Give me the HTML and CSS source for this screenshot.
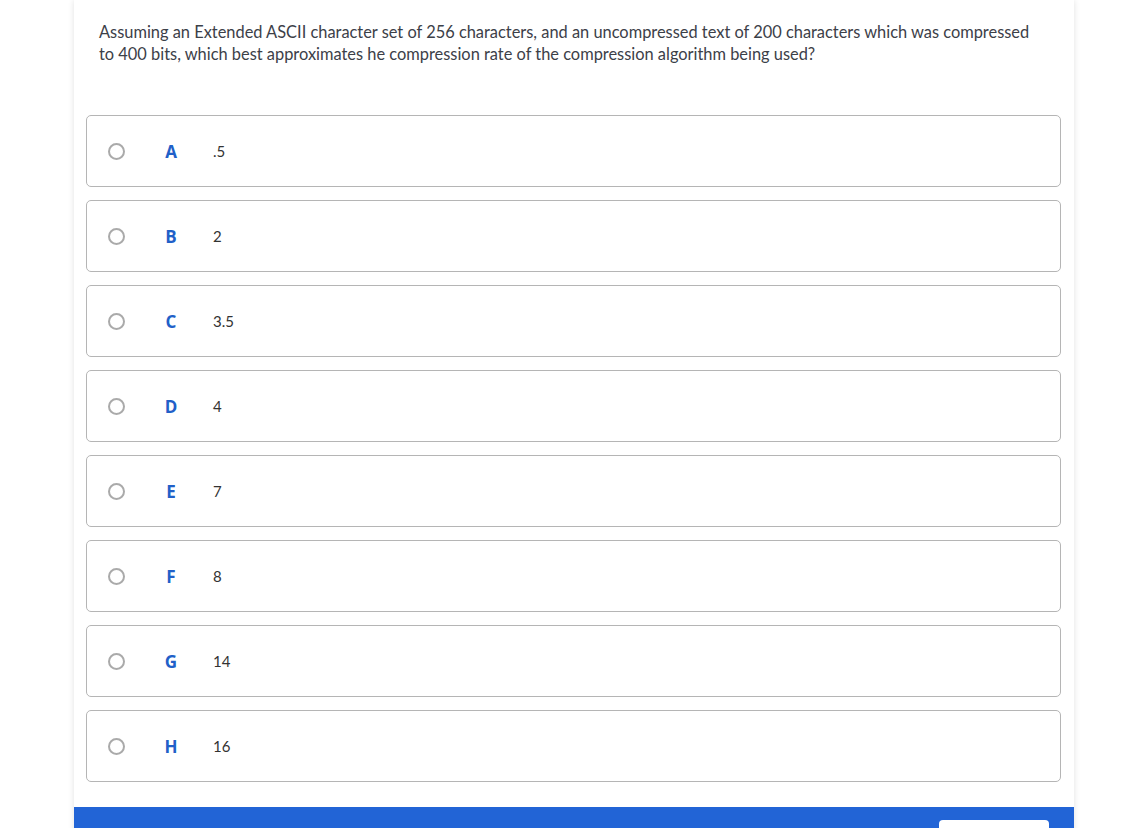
FILE: index.html
```html
<!DOCTYPE html>
<html lang="en">
<head>
    <meta charset="UTF-8">
    <meta name="viewport" content="width=device-width, initial-scale=1.0">
    <title>Question</title>
    <link rel="stylesheet" href="styles.css">
</head>
<body>
    <div class="card">
        <p class="question">Assuming an Extended ASCII character set of 256 characters, and an uncompressed text of 200 characters which was compressed to 400 bits, which best approximates he compression rate of the compression algorithm being used?</p>
        <div class="options">
            <label class="option"><span class="radio"></span><span class="letter">A</span><span class="value">.5</span></label>
            <label class="option"><span class="radio"></span><span class="letter">B</span><span class="value">2</span></label>
            <label class="option"><span class="radio"></span><span class="letter">C</span><span class="value">3.5</span></label>
            <label class="option"><span class="radio"></span><span class="letter">D</span><span class="value">4</span></label>
            <label class="option"><span class="radio"></span><span class="letter">E</span><span class="value">7</span></label>
            <label class="option"><span class="radio"></span><span class="letter">F</span><span class="value">8</span></label>
            <label class="option"><span class="radio"></span><span class="letter">G</span><span class="value">14</span></label>
            <label class="option"><span class="radio"></span><span class="letter">H</span><span class="value">16</span></label>
        </div>
        <div class="footer">
            <button class="next"></button>
        </div>
    </div>
</body>
</html>
```
FILE: styles.css
```css
body {
    margin: 0;
    background-color: #fff;
    font-family: 'Lato', sans-serif;
    color: #3c4048;
}
.card {
    width: 1000px;
    margin-left: 74px;
    background-color: #fff;
    box-shadow: 0 0 6px rgba(0, 0, 0, 0.12);
    min-height: 828px;
    display: flex;
    flex-direction: column;
}
.question {
    margin: 0;
    padding: 21px 34px 0 25px;
    font-size: 16.4px;
    line-height: 22px;
    height: 94px;
}
.options {
    display: flex;
    flex-direction: column;
    gap: 13px;
    padding: 0 13px 0 12px;
}
.option {
    display: flex;
    align-items: center;
    height: 70px;
    border: 1px solid #b5b5b5;
    border-radius: 5px;
    padding-left: 21px;
    font-size: 15px;
}
.radio {
    width: 13px;
    height: 13px;
    border: 2px solid #aaa;
    border-radius: 50%;
    flex-shrink: 0;
}
.letter {
    width: 20px;
    margin-left: 36px;
    font-family: 'Open Sans', sans-serif;
    font-weight: 700;
    font-size: 17px;
    color: #2160c8;
    text-align: center;
}
.value {
    margin-left: 32px;
    color: #333;
}
.footer {
    margin-top: 25px;
    background-color: #2264d6;
    height: 60px;
    display: flex;
    justify-content: flex-end;
    padding: 13px 25px 0 0;
    box-sizing: border-box;
}
.next {
    width: 110px;
    height: 40px;
    background-color: #fff;
    border: none;
    border-radius: 4px;
}
```
